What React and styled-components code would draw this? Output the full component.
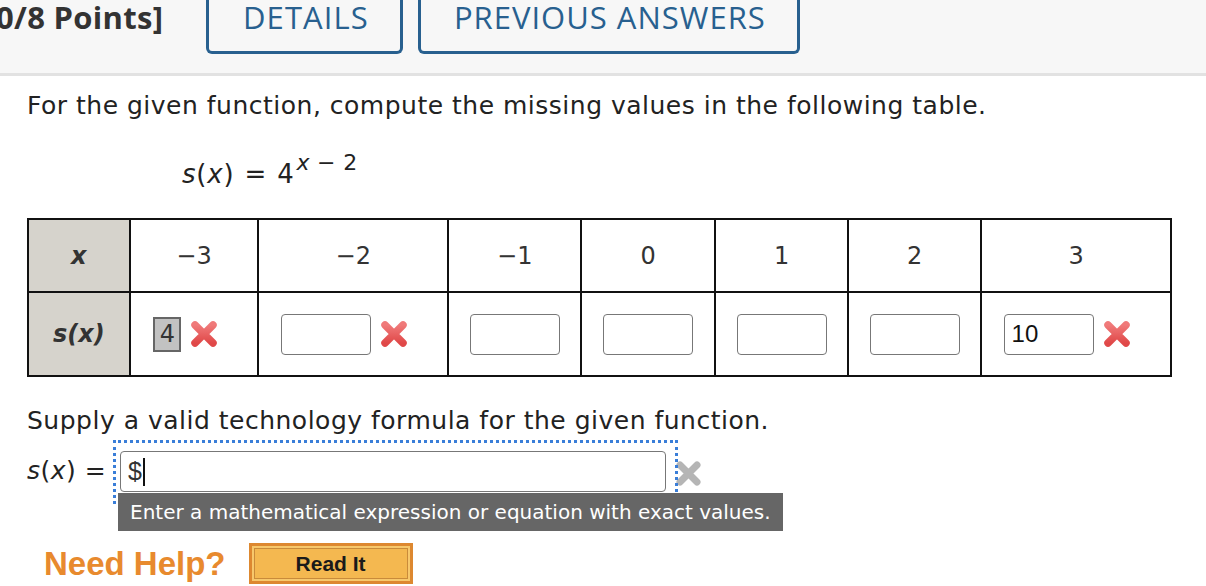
import React from "react";
import styled, { createGlobalStyle } from "styled-components";

const Global = createGlobalStyle`
  html, body { margin: 0; padding: 0; background: #fff; }
  body { width: 1206px; height: 586px; overflow: hidden; font-family: "DejaVu Sans", Verdana, sans-serif; color: #222; }
`;

const Header = styled.div`
  height: 73px;
  background: #f7f7f7;
  border-bottom: 3px solid #e2e2e2;
  display: flex;
  align-items: flex-start;
`;

const Points = styled.div`
  font-family: "Open Sans", sans-serif;
  font-weight: 700;
  font-size: 31px;
  letter-spacing: 0.3px;
  color: #333;
  line-height: 34px;
  margin-left: -4px;
  width: 210px;
`;

const Tab = styled.div`
  height: 51px;
  box-sizing: content-box;
  border: 3px solid #28608f;
  border-top: 0;
  border-radius: 0 0 6px 6px;
  padding: 0 ${(p) => p.$pad}px 0 ${(p) => p.$padL}px;
  margin-right: 15px;
  font-family: "Open Sans", sans-serif;
  font-size: 31px;
  color: #28608f;
  line-height: 34px;
  letter-spacing: ${(p) => p.$ls}px;
`;

const Body = styled.div`
  padding: 15px 0 0 27px;
`;

const Prompt = styled.div`
  font-size: 25px;
  letter-spacing: 0.5px;
  line-height: 30px;
  color: #222;
`;

const Formula = styled.div`
  font-size: 26px;
  letter-spacing: 0.8px;
  word-spacing: 1px;
  line-height: 30px;
  margin: 38px 0 0 155px;
  color: #222;
`;

const Var = styled.i`
  font-style: italic;
`;

const Sup = styled.sup`
  font-size: 22px;
  letter-spacing: 0.3px;
  word-spacing: 0;
  position: relative;
  top: -3px;
  vertical-align: super;
  line-height: 0;
  margin-left: 2px;
`;

const Table = styled.table`
  border-collapse: collapse;
  margin-top: 29px;
  width: 1145px;
  font-size: 24px;
`;

const Cell = styled.td`
  border: 2px solid #111;
  text-align: center;
  padding: 0;
  width: ${(p) => p.$w}px;
  height: ${(p) => p.$h}px;
  background: ${(p) => (p.$head ? "#d6d3cc" : "#fff")};
  font-weight: ${(p) => (p.$head ? 700 : 400)};
  font-style: ${(p) => (p.$head ? "italic" : "normal")};
  color: #333;
`;

const CellInner = styled.div`
  display: flex;
  align-items: center;
  justify-content: center;
  gap: 9px;
  padding-right: ${(p) => p.$shift || 0}px;
`;

const Box = styled.div`
  width: 90px;
  height: 41px;
  border: 1.5px solid #777;
  border-radius: 4px;
  background: #fff;
  font-family: "Liberation Sans", Arial, sans-serif;
  font-size: 24px;
  text-align: left;
  padding-left: 7px;
  box-sizing: border-box;
  display: flex;
  align-items: center;
  color: #111;
`;

const SmallBox = styled.div`
  width: 28px;
  height: 35px;
  border: 2.5px solid #666;
  background: #c2c2c2;
  box-sizing: border-box;
  display: flex;
  align-items: center;
  justify-content: center;
  font-size: 24px;
  color: #333;
`;

const Supply = styled.div`
  font-size: 25px;
  letter-spacing: 0.5px;
  line-height: 30px;
  margin-top: 29px;
`;

const AnswerRow = styled.div`
  display: flex;
  align-items: flex-start;
  margin-top: 4px;
`;

const Label = styled.div`
  font-size: 25px;
  letter-spacing: 0.5px;
  line-height: 30px;
  margin-top: 16px;
  width: 86px;
  white-space: nowrap;
`;

const Focus = styled.div`
  position: relative;
  width: 565px;
  height: 64px;
  box-sizing: border-box;
  border: 3px dotted #3a7ed8;
  border-bottom: 0;
  padding: 8px 0 0 4px;
`;

const Field = styled.div`
  width: 546px;
  height: 41px;
  box-sizing: border-box;
  border: 1.5px solid #777;
  border-radius: 4px;
  display: flex;
  align-items: center;
  padding-left: 7px;
  font-family: "Liberation Sans", Arial, sans-serif;
  font-size: 25px;
  color: #333;
`;

const Caret = styled.span`
  display: inline-block;
  width: 2px;
  height: 28px;
  background: #111;
  margin-left: 1px;
`;

const Tooltip = styled.div`
  position: absolute;
  left: 2px;
  top: 50px;
  width: 665px;
  height: 38px;
  background: #666;
  color: #fff;
  font-size: 20px;
  line-height: 38px;
  padding-left: 12px;
  box-sizing: border-box;
  white-space: nowrap;
  z-index: 2;
`;

const GreyX = styled.div`
  margin: 20px 0 0 -3px;
`;

const HelpRow = styled.div`
  display: flex;
  align-items: center;
  margin: 39px 0 0 17px;
  gap: 23px;
`;

const NeedHelp = styled.div`
  font-family: "Liberation Sans", Arial, sans-serif;
  font-weight: 700;
  font-size: 33px;
  color: #e88a2e;
`;

const ReadIt = styled.div`
  width: 164px;
  height: 41px;
  box-sizing: border-box;
  border: 3px solid #dd8830;
  background: #f4b850;
  display: flex;
  align-items: center;
  justify-content: center;
  box-shadow: inset 0 0 0 2px #f7c86c, inset 0 0 0 3px #c98b3a;
  font-family: "Liberation Sans", Arial, sans-serif;
  font-weight: 700;
  font-size: 21px;
  color: #1a1a1a;
`;

const RedX = () => (
  <svg width="28" height="28" viewBox="0 0 28 28">
    <defs>
      <linearGradient id="rx" x1="0" y1="0" x2="0" y2="1">
        <stop offset="0" stopColor="#f07a7a" />
        <stop offset="1" stopColor="#e04848" />
      </linearGradient>
    </defs>
    <path d="M5 5 L23 23 M23 5 L5 23" stroke="url(#rx)" strokeWidth="7.5" strokeLinecap="round" />
  </svg>
);

const GreyXIcon = () => (
  <svg width="27" height="27" viewBox="0 0 27 27">
    <path d="M5 5 L22 22 M22 5 L5 22" stroke="#b5b5b5" strokeWidth="7" strokeLinecap="round" />
  </svg>
);

const cols = [
  { x: "\u22123", w: 129 },
  { x: "\u22122", w: 190 },
  { x: "\u22121", w: 133 },
  { x: "0", w: 134 },
  { x: "1", w: 133 },
  { x: "2", w: 133 },
  { x: "3", w: 190 },
];

export default function App() {
  return (
    <>
      <Global />
      <Header>
        <Points>0/8 Points]</Points>
        <Tab $padL={34} $pad={31} $ls={1.1}>DETAILS</Tab>
        <Tab $padL={33} $pad={31} $ls={1.0}>PREVIOUS ANSWERS</Tab>
      </Header>
      <Body>
        <Prompt>For the given function, compute the missing values in the following table.</Prompt>
        <Formula>
          <Var>s</Var>(<Var>x</Var>) = 4<Sup><Var>x</Var> − 2</Sup>
        </Formula>
        <Table>
          <tbody>
            <tr>
              <Cell $head $w={102} $h={71}>x</Cell>
              {cols.map((c) => (
                <Cell key={c.x} $w={c.w} $h={71}>{c.x}</Cell>
              ))}
            </tr>
            <tr>
              <Cell $head $w={102} $h={82}>s(x)</Cell>
              <Cell $w={129} $h={82}>
                <CellInner $shift={16}><SmallBox>4</SmallBox><RedX /></CellInner>
              </Cell>
              <Cell $w={190} $h={82}>
                <CellInner $shift={18}><Box /><RedX /></CellInner>
              </Cell>
              <Cell $w={133} $h={82}><CellInner><Box /></CellInner></Cell>
              <Cell $w={134} $h={82}><CellInner><Box /></CellInner></Cell>
              <Cell $w={133} $h={82}><CellInner><Box /></CellInner></Cell>
              <Cell $w={133} $h={82}><CellInner><Box /></CellInner></Cell>
              <Cell $w={190} $h={82}>
                <CellInner $shift={18}><Box>10</Box><RedX /></CellInner>
              </Cell>
            </tr>
          </tbody>
        </Table>
        <Supply>Supply a valid technology formula for the given function.</Supply>
        <AnswerRow>
          <Label><Var>s</Var>(<Var>x</Var>) =</Label>
          <Focus>
            <Field>$<Caret /></Field>
            <Tooltip>Enter a mathematical expression or equation with exact values.</Tooltip>
          </Focus>
          <GreyX><GreyXIcon /></GreyX>
        </AnswerRow>
        <HelpRow>
          <NeedHelp>Need Help?</NeedHelp>
          <ReadIt>Read It</ReadIt>
        </HelpRow>
      </Body>
    </>
  );
}
